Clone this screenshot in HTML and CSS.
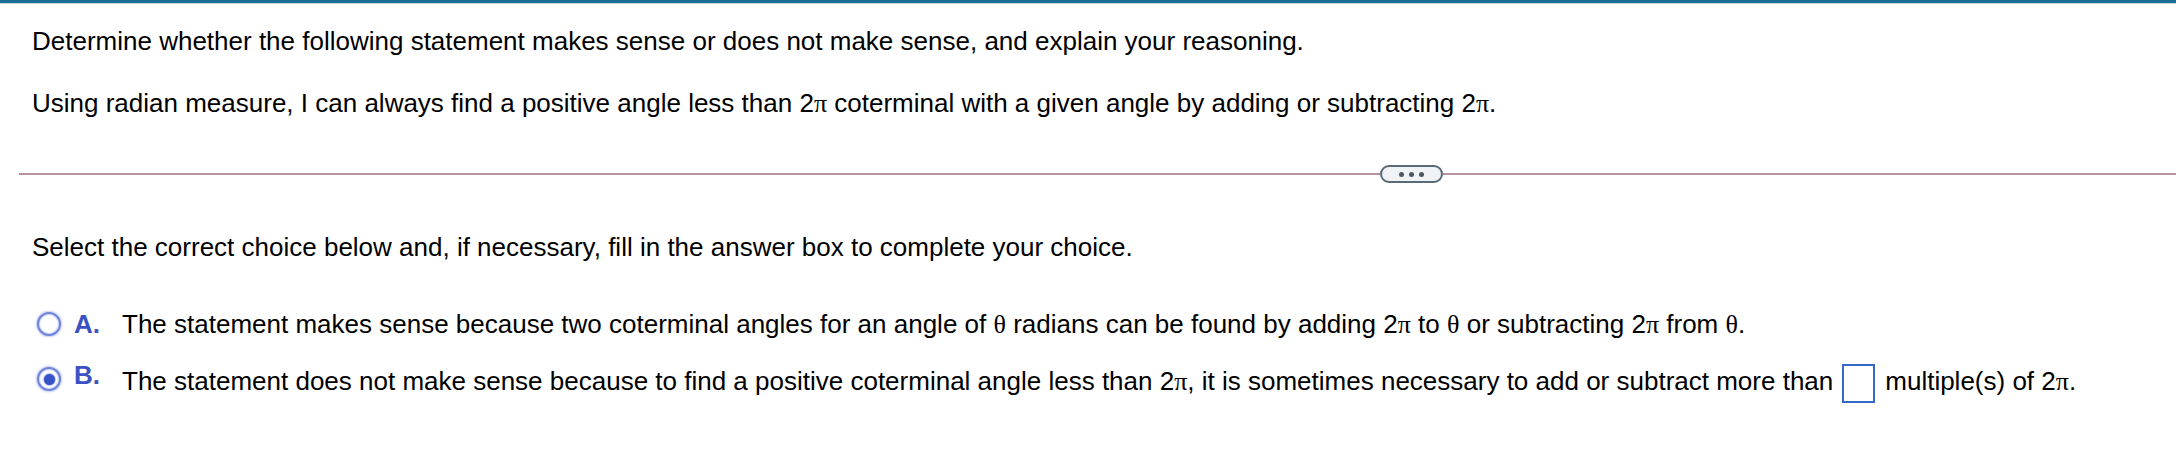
FILE: index.html
```html
<!DOCTYPE html>
<html>
<head>
<meta charset="utf-8">
<link rel="stylesheet" href="styles.css">
</head>
<body>
<div class="topbar"></div>
<div class="question">
  <p class="line first">Determine whether the following statement makes sense or does not make sense, and explain your reasoning.</p>
  <p class="line second">Using radian measure, I can always find a positive angle less than 2<span class="m">π</span> coterminal with a given angle by adding or subtracting 2<span class="m">π</span>.</p>
</div>
<div class="divider">
  <span class="rule rule-left"></span>
  <span class="more"><i class="dot"></i><i class="dot"></i><i class="dot"></i></span>
  <span class="rule rule-right"></span>
</div>
<div class="answer">
  <p class="line prompt">Select the correct choice below and, if necessary, fill in the answer box to complete your choice.</p>
  <div class="choice choice-a">
    <span class="radio"></span>
    <span class="label">A.</span>
    <span class="text">The statement makes sense because two coterminal angles for an angle of <span class="m">θ</span> radians can be found by adding 2<span class="m">π</span> to <span class="m">θ</span> or subtracting 2<span class="m">π</span> from <span class="m">θ</span>.</span>
  </div>
  <div class="choice choice-b">
    <span class="radio checked"></span>
    <span class="label">B.</span>
    <span class="text">The statement does not make sense because to find a positive coterminal angle less than 2<span class="m">π</span>, it is sometimes necessary to add or subtract more than<span class="box"></span>multiple(s) of 2<span class="m">π</span>.</span>
  </div>
</div>
</body>
</html>
```

FILE: styles.css
```css
html, body {
  margin: 0;
  padding: 0;
  background: #ffffff;
}
body {
  font-family: "Liberation Sans", Arial, sans-serif;
  font-size: 26px;
  line-height: 30px;
  color: #000000;
  width: 2176px;
  height: 466px;
  overflow: hidden;
}
.topbar {
  height: 3px;
  background: #1b6f95;
  border-bottom: 1px solid #cdd8de;
}
.line {
  margin: 0;
  white-space: nowrap;
}
.m {
  font-family: "Liberation Serif", "Times New Roman", serif;
}
.question {
  padding: 22px 0 0 32px;
}
.second {
  margin-top: 32px;
}
.divider {
  display: flex;
  align-items: center;
  height: 18px;
  margin-top: 46px;
  padding-left: 19px;
}
.rule {
  height: 2px;
  background: #b8929f;
}
.rule-left {
  width: 1361px;
}
.rule-right {
  flex: 1;
}
.more {
  box-sizing: border-box;
  width: 63px;
  height: 18px;
  border: 2px solid #5b6a79;
  border-radius: 9px;
  background: #eff3f5;
  display: flex;
  align-items: center;
  justify-content: center;
  gap: 5px;
}
.dot {
  width: 5px;
  height: 5px;
  border-radius: 50%;
  background: #4d5863;
}
.answer {
  padding: 49px 0 0 32px;
}
.choice {
  display: flex;
  align-items: flex-start;
  white-space: nowrap;
}
.choice-a {
  margin-top: 47px;
}
.choice-b {
  margin-top: 20px;
}
.radio {
  box-sizing: border-box;
  flex: none;
  width: 24px;
  height: 24px;
  margin: 3px 0 0 5px;
  border-radius: 50%;
  border: 2px solid #6f84da;
  box-shadow: 0 0 2px 1px rgba(140, 160, 230, 0.55), inset 0 0 1px 1px rgba(140, 160, 230, 0.4);
  background: #ffffff;
  display: flex;
  align-items: center;
  justify-content: center;
}
.choice-b .radio {
  margin-top: 7px;
}
.radio.checked::after {
  content: "";
  width: 11px;
  height: 11px;
  border-radius: 50%;
  background: #3552c6;
  box-shadow: 0 0 1px 1px rgba(53, 82, 198, 0.35);
}
.label {
  margin-left: 13px;
  width: 48px;
  flex: none;
  font-weight: bold;
  color: #3a52c4;
}
.box {
  display: inline-block;
  box-sizing: border-box;
  width: 33px;
  height: 39px;
  margin: 4px 10px 4px 9px;
  border: 2px solid #3468c8;
  vertical-align: middle;
}
```
